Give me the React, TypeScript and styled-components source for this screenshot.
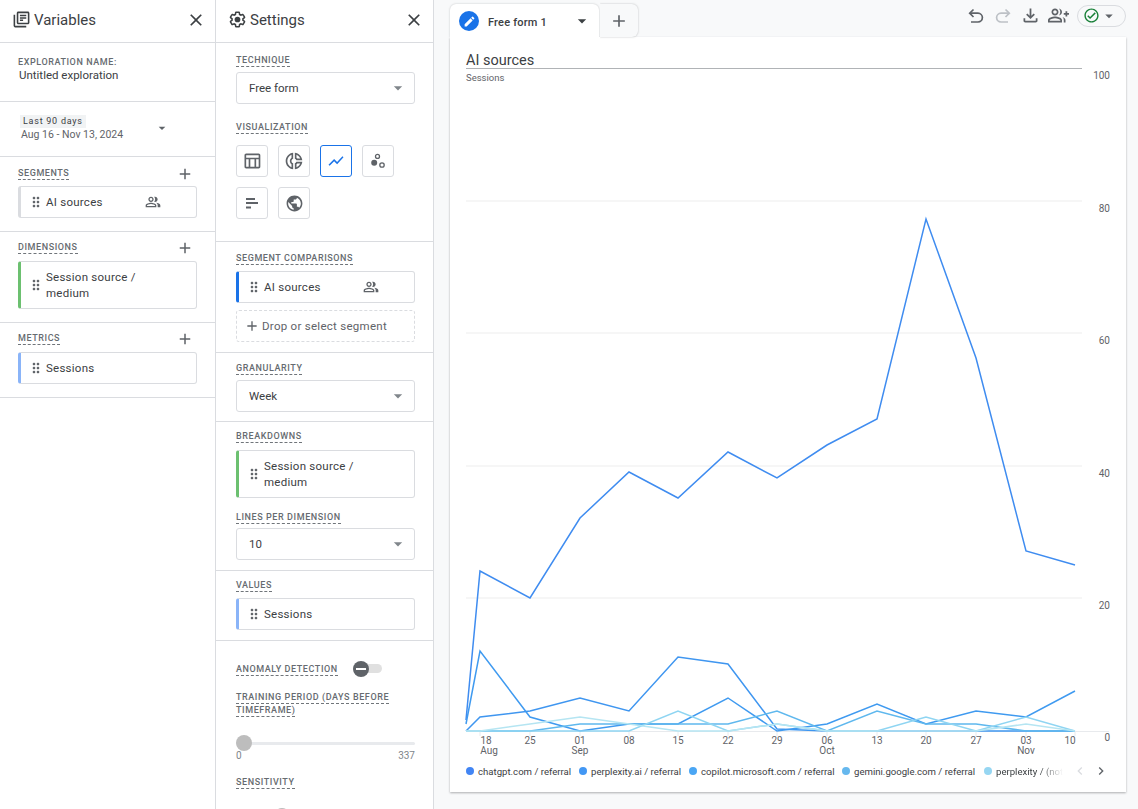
import React from "react";
import styled, { createGlobalStyle } from "styled-components";
import {
  MdAdd, MdArrowDropDown, MdChevronLeft, MdChevronRight, MdClose, MdDragIndicator, MdEdit,
  MdOutlineCheckCircle, MdOutlineDonutSmall, MdOutlineFileDownload, MdOutlineGroupAdd, MdOutlineLibraryBooks,
  MdOutlinePeopleAlt, MdOutlineTableChart, MdPublic, MdShowChart,
} from "react-icons/md";

const Global = createGlobalStyle`
  html, body { margin: 0; padding: 0; height: 100%; overflow: hidden; background: #f8f9fa; }
  body { font-family: Roboto, "Liberation Sans", sans-serif; color: #3c4043; }
  * { box-sizing: border-box; }
`;

const Page = styled.div`display: flex; width: 1138px; height: 809px; overflow: hidden;`;
const Column = styled.aside<{ $w: number }>`
  width: ${(p) => p.$w}px; flex: none; height: 809px; background: #fff; border-right: 1px solid #dadce0; overflow: hidden;
`;
const PanelHeader = styled.header`
  height: 43px; border-bottom: 1px solid #dadce0; display: flex; align-items: center; padding: 0 9px 3px 12px;
  font-size: 15px; color: #3c4043; gap: 3px;
  > svg:first-child { color: #3c4043; }
`;
const HeaderTitle = styled.span`flex: 1;`;
const Section = styled.section<{ $h: number; $pt: number; $px?: number }>`
  height: ${(p) => p.$h}px; padding: ${(p) => p.$pt}px ${(p) => p.$px ?? 18}px 0; border-bottom: 1px solid #dadce0;
`;
const OpenSection = styled.section`padding: 18px 18px 0 20px;`;
const Label = styled.div<{ $mb?: number; $mt?: number }>`
  display: block; width: fit-content; font-size: 9px; font-weight: 500; letter-spacing: .58px; line-height: 12px;
  color: #666b70; text-transform: uppercase; border-bottom: 1px dashed #70757a;
  margin-bottom: ${(p) => p.$mb ?? 5}px; margin-top: ${(p) => p.$mt ?? 0}px;
`;
const PlainLabel = styled.div`font-size: 9px; font-weight: 500; letter-spacing: .58px; color: #666b70; line-height: 12px;`;
const NameValue = styled.div`font-size: 11.5px; color: #3c4043; line-height: 14px; margin: 0 0 0 1px;`;
const DateRow = styled.div`display: flex; align-items: center; gap: 0; padding-left: 2px;`;
const DateText = styled.div`width: 134px;`;
const DateChip = styled.span`
  display: inline-block; background: #f1f3f4; font-size: 9px; font-weight: 400; letter-spacing: .75px; padding: 0 3px;
  line-height: 13px; color: #3c4043;
`;
const DateRange = styled.div`font-size: 10.5px; color: #5f6368; line-height: 13px; margin: 0 0 0 1px;`;
const DateCaret = styled.span`display: flex; margin-top: 5px; color: #5f6368;`;
const LabelRow = styled.div`display: flex; justify-content: space-between; align-items: flex-start; svg { color: #5f6368; margin: -2px 3px 0 0; }`;
const Chip = styled.div<{ $bar: string; $tall?: boolean }>`
  position: relative; display: flex; align-items: center; width: 179px; height: ${(p) => (p.$tall ? 48 : 32)}px;
  border: 1px solid #dadce0; border-left: 3px solid ${(p) => p.$bar}; border-radius: 3px; padding-left: 7px;
  font-size: 11.5px; color: #3c4043; line-height: 16px; letter-spacing: .25px;
  > svg:first-child { color: #5f6368; flex: none; margin-right: 2px; }
`;
const ChipText = styled.span`flex: 1;`;
const ChipPeople = styled.span`display: flex; color: #5f6368; margin-right: 35px;`;
const Select = styled.div`
  display: flex; align-items: center; justify-content: space-between; width: 179px; height: 32px;
  border: 1px solid #dadce0; border-radius: 3px; padding: 0 6px 0 12px; font-size: 11.5px; color: #3c4043;
  svg { color: #80868b; }
`;
const VizGrid = styled.div`display: flex; flex-wrap: wrap; gap: 10px; width: 179px;`;
const VizButton = styled.div<{ $active?: boolean }>`
  width: 32px; height: 32px; display: flex; align-items: center; justify-content: center; border-radius: 3px;
  border: 1px solid ${(p) => (p.$active ? "#1a73e8" : "#dadce0")}; color: ${(p) => (p.$active ? "#1a73e8" : "#5f6368")};
`;
const DropZone = styled.div`
  display: flex; align-items: center; gap: 2px; width: 179px; height: 32px; margin-top: 7px; padding-left: 7px;
  border: 1px dashed #dadce0; border-radius: 3px; font-size: 11.5px; color: #5f6368; letter-spacing: .28px;
`;
const ToggleRow = styled.div`display: flex; align-items: center; gap: 15px; margin-bottom: 12px; height: 20px;`;
const Toggle = styled.div`position: relative; width: 29px; height: 9px; border-radius: 5px; background: #e0e0e0; margin-top: -1px;`;
const Knob = styled.span`
  position: absolute; left: 0; top: -3.5px; width: 16px; height: 16px; border-radius: 50%; background: #5f6368;
  &::after { content: ""; position: absolute; left: 3px; right: 3px; top: 7px; height: 2px; background: #fff; }
`;
const SliderTrack = styled.div<{ $mt: number }>`
  position: relative; height: 3px; width: 179px; background: #e8eaed; border-radius: 2px; margin-top: ${(p) => p.$mt}px;
`;
const SliderThumb = styled.span<{ $l: number }>`
  position: absolute; left: ${(p) => p.$l}px; top: -7px; width: 16px; height: 16px; border-radius: 50%; background: #bdbdbd;
`;
const SliderEnds = styled.div`display: flex; justify-content: space-between; width: 179px; font-size: 10px; color: #80868b; margin-top: 5px; line-height: 12px;`;
const Main = styled.main`flex: 1; min-width: 0; padding: 4px 12px 0 16px; display: flex; flex-direction: column;`;
const TopBar = styled.div`display: flex; height: 33px; align-items: stretch;`;
const Tab = styled.div`
  width: 149px; background: #fff; border-radius: 6px 6px 0 0; display: flex; align-items: center; padding: 1px 7px 0 9px;
  box-shadow: 0 0 2px rgba(60, 64, 67, .3); font-size: 11px; font-weight: 500; color: #3c4043; letter-spacing: .2px;
  clip-path: inset(-3px -3px 0 -3px);
`;
const TabBadge = styled.span`
  width: 20px; height: 20px; border-radius: 50%; background: #1a73e8; color: #fff; display: flex; align-items: center;
  justify-content: center; margin-right: 9px; flex: none;
`;
const TabName = styled.span`flex: 1; padding-top: 2px;`;
const TabCaret = styled.span`display: flex; color: #3c4043; margin-top: -1px;`;
const AddTab = styled.div`
  width: 38px; margin-left: 1px; background: #f8f9fa; border-radius: 0 6px 6px 0; display: flex; align-items: center; justify-content: center;
  box-shadow: 0 0 2px rgba(60, 64, 67, .35); color: #5f6368; clip-path: inset(-3px -3px -3px 0);
`;
const Tools = styled.div`flex: 1; display: flex; justify-content: flex-end; align-items: center; margin-top: -10px; gap: 7px; color: #5f6368;`;
const ToolIcon = styled.span<{ $off?: boolean }>`display: flex; color: ${(p) => (p.$off ? "#bdc1c6" : "#5f6368")};`;
const StatusPill = styled.div`
  width: 49px; height: 22px; border: 1px solid #dadce0; border-radius: 11px; display: flex; align-items: center;
  padding-left: 5px; color: #5f6368; margin-left: 1px;
  > svg:first-child { color: #188038; }
`;
const Card = styled.article`
  width: 676px; height: 755px; background: #fff; box-shadow: 0 1px 2px rgba(60, 64, 67, .4); display: flex; flex-direction: column;
`;
const CardTitle = styled.h2`
  margin: 0 44px 0 16px; height: 32px; padding-top: 15px; font-size: 14.5px; font-weight: 400; line-height: 17px; color: #3c4043;
  border-bottom: 1px solid #b0b3b6;
`;
const ChartSvg = styled.svg`display: block; width: 676px; height: 691px; flex: none;`;
const AxisText = styled.text<{ $small?: boolean }>`
  font-family: Roboto, "Liberation Sans", sans-serif; font-size: ${(p) => (p.$small ? 9.5 : 10)}px; fill: #5f6368;
`;
const Legend = styled.div`display: flex; align-items: center; height: 32px; padding: 0 0 10px 16px; position: relative;`;
const LegendItem = styled.div<{ $w: number; $fade?: boolean }>`
  display: flex; align-items: center; gap: 4px; width: ${(p) => p.$w}px; flex: none; white-space: nowrap; overflow: hidden;
  font-size: 9.6px; color: #3c4043;
  ${(p) => (p.$fade ? "mask-image: linear-gradient(to right, #000 70%, transparent 100%);" : "")}
`;
const Dot = styled.span<{ $c: string }>`width: 8px; height: 8px; border-radius: 50%; flex: none; background: ${(p) => p.$c};`;
const Pager = styled.div`display: flex; align-items: center; gap: 5px; margin-left: 9px;`;
const PagerBtn = styled.span<{ $off?: boolean }>`display: flex; color: ${(p) => (p.$off ? "#dadce0" : "#5f6368")};`;

const X = [466, 480, 530, 580, 629, 678, 728, 777, 827, 877, 926, 976, 1026, 1075];
const series: { c: string; y: number[] }[] = [
  { c: "#3f96f0", y: [731, 717, 711, 698, 711, 657, 664, 729, 731, 731, 731, 731, 731, 731] },
  { c: "#3f8cf0", y: [720, 571, 598, 518, 472, 498, 452, 478, 445, 419, 219, 358, 551, 565] },
  { c: "#3f9af0", y: [724, 651, 717, 731, 724, 724, 698, 731, 724, 704, 724, 711, 717, 691] },
  { c: "#5fb8ee", y: [731, 731, 731, 724, 724, 724, 724, 711, 731, 711, 724, 724, 731, 731] },
  { c: "#8fd5f2", y: [731, 731, 731, 731, 731, 711, 731, 724, 731, 731, 717, 731, 717, 731] },
  { c: "#b5e5f2", y: [731, 731, 724, 717, 724, 731, 731, 724, 731, 731, 731, 731, 724, 731] },
];
const grid = [201, 333, 466, 598];
const ticks = [["18", "Aug"], ["25"], ["01", "Sep"], ["08"], ["15"], ["22"], ["29"], ["06", "Oct"], ["13"], ["20"], ["27"], ["03", "Nov"], ["10"]];
const tickShift = [6, 0, 0, 0, 0, 0, 0, 0, 0, 0, 0, 0, -5];
const yLabels: [string, number][] = [["100", 79], ["80", 212], ["60", 344], ["40", 477], ["20", 609], ["0", 741]];
const legend = [
  { t: "chatgpt.com / referral", c: "#4285f4", w: 113 },
  { t: "perplexity.ai / referral", c: "#4297f4", w: 110 },
  { t: "copilot.microsoft.com / referral", c: "#4aa6f4", w: 153 },
  { t: "gemini.google.com / referral", c: "#66b8ee", w: 142 },
  { t: "perplexity / (not set)", c: "#96d6f2", w: 79, fade: true },
];

const HBars = () => (
  <svg width="16" height="16" viewBox="0 0 16 16" fill="currentColor">
    <rect x="2" y="3" width="9" height="2" /><rect x="2" y="7" width="12" height="2" /><rect x="2" y="11.5" width="5" height="2" />
  </svg>
);
const Bubbles = () => (
  <svg width="16" height="16" viewBox="0 0 16 16">
    <circle cx="7.5" cy="3.4" r="2" fill="none" stroke="currentColor" strokeWidth="1.3" />
    <circle cx="4.2" cy="9.8" r="3" fill="currentColor" />
    <circle cx="12" cy="12" r="2.2" fill="none" stroke="currentColor" strokeWidth="1.3" />
  </svg>
);
const Gear = () => (
  <svg width="19" height="19" viewBox="0 0 24 24" fill="none" stroke="currentColor" strokeWidth="2.1">
    <path transform="translate(1 1) scale(.917)" d="M19.43 12.98c.04-.32.07-.64.07-.98s-.03-.66-.07-.98l2.11-1.65c.19-.15.24-.42.12-.64l-2-3.46c-.12-.22-.39-.3-.61-.22l-2.49 1c-.52-.4-1.08-.73-1.69-.98l-.38-2.65C14.46 2.18 14.25 2 14 2h-4c-.25 0-.46.18-.49.42l-.38 2.65c-.61.25-1.17.59-1.69.98l-2.49-1c-.23-.09-.49 0-.61.22l-2 3.46c-.13.22-.07.49.12.64l2.11 1.65c-.04.32-.07.65-.07.98s.03.66.07.98l-2.11 1.65c-.19.15-.24.42-.12.64l2 3.46c.12.22.39.3.61.22l2.49-1c.52.4 1.08.73 1.69.98l.38 2.65c.03.24.24.42.49.42h4c.25 0 .46-.18.49-.42l.38-2.65c.61-.25 1.17-.59 1.69-.98l2.49 1c.23.09.49 0 .61-.22l2-3.46c.12-.22.07-.49-.12-.64l-2.11-1.65z" />
    <circle cx="12" cy="12" r="3.6" fill="currentColor" stroke="none" />
  </svg>
);
const Undo = ({ flip }: { flip?: boolean }) => (
  <svg width="20" height="20" viewBox="0 0 20 20" fill="none" stroke="currentColor" strokeWidth="1.7" transform={flip ? "scale(-1 1)" : undefined}>
    <path d="M7.5 3.5L3.7 7.2l3.8 3.8" />
    <path d="M4 7.2h8a3.9 3.9 0 0 1 0 8.8H5" />
  </svg>
);

const Chart = () => (
  <ChartSvg viewBox="450 69 676 691">
    {grid.map((y) => <line key={y} x1="466" x2="1082" y1={y} y2={y} stroke="#ededed" />)}
    <line x1="466" x2="1109" y1="731.5" y2="731.5" stroke="#e8eaed" />
    {series.map((s, i) => (
      <polyline key={i} fill="none" stroke={s.c} strokeWidth="1.5"
        points={s.y.map((y, j) => `${X[j]},${y}`).join(" ")} />
    ))}
    {X.slice(1).map((x) => <line key={x} x1={x} x2={x} y1="732" y2="736" stroke="#e8eaed" />)}
    <AxisText $small x="466" y="81">Sessions</AxisText>
    {yLabels.map(([t, y]) => <AxisText key={t} x="1110" y={y} textAnchor="end">{t}</AxisText>)}
    {ticks.map((t, i) => (
      <g key={i}>
        <AxisText x={X[i + 1] + tickShift[i]} y="744" textAnchor="middle">{t[0]}</AxisText>
        {t[1] && <AxisText x={X[i + 1] + (i === 0 ? 9 : 0)} y="754" textAnchor="middle">{t[1]}</AxisText>}
      </g>
    ))}
  </ChartSvg>
);

const Close = () => <MdClose size={20} color="#3c4043" />;
const Grip = () => <MdDragIndicator size={16} />;

export default function App() {
  return (
    <Page>
      <Global />
      <Column $w={216}>
        <PanelHeader>
          <MdOutlineLibraryBooks size={19} />
          <HeaderTitle>Variables</HeaderTitle>
          <Close />
        </PanelHeader>
        <Section $h={59} $pt={13}>
          <PlainLabel>EXPLORATION NAME:</PlainLabel>
          <NameValue>Untitled exploration</NameValue>
        </Section>
        <Section $h={55} $pt={7}>
          <DateRow>
            <DateText>
              <DateChip>Last 90 days</DateChip>
              <DateRange>Aug 16 - Nov 13, 2024</DateRange>
            </DateText>
            <DateCaret><MdArrowDropDown size={16} /></DateCaret>
          </DateRow>
        </Section>
        <Section $h={75} $pt={10}>
          <LabelRow><Label $mb={6}>Segments</Label><MdAdd size={18} /></LabelRow>
          <Chip $bar="#dadce0"><Grip /><ChipText>AI sources</ChipText><ChipPeople><MdOutlinePeopleAlt size={16} /></ChipPeople></Chip>
        </Section>
        <Section $h={91} $pt={9}>
          <LabelRow><Label $mb={7}>Dimensions</Label><MdAdd size={18} /></LabelRow>
          <Chip $bar="#6cc070" $tall><Grip /><ChipText>Session source /<br />medium</ChipText></Chip>
        </Section>
        <Section $h={75} $pt={9}>
          <LabelRow><Label $mb={7}>Metrics</Label><MdAdd size={18} /></LabelRow>
          <Chip $bar="#8ab4f8"><Grip /><ChipText>Sessions</ChipText></Chip>
        </Section>
      </Column>
      <Column $w={218}>
        <PanelHeader>
          <Gear />
          <HeaderTitle>Settings</HeaderTitle>
          <Close />
        </PanelHeader>
        <Section $h={199} $pt={11} $px={20}>
          <Label>Technique</Label>
          <Select>Free form<MdArrowDropDown size={20} /></Select>
          <Label $mt={17} $mb={11}>Visualization</Label>
          <VizGrid>
            <VizButton><MdOutlineTableChart size={20} /></VizButton>
            <VizButton><MdOutlineDonutSmall size={20} /></VizButton>
            <VizButton $active><MdShowChart size={18} /></VizButton>
            <VizButton><Bubbles /></VizButton>
            <VizButton><HBars /></VizButton>
            <VizButton><MdPublic size={19} /></VizButton>
          </VizGrid>
        </Section>
        <Section $h={111} $pt={10} $px={20}>
          <Label $mb={6}>Segment comparisons</Label>
          <Chip $bar="#1a73e8"><Grip /><ChipText>AI sources</ChipText><ChipPeople><MdOutlinePeopleAlt size={16} /></ChipPeople></Chip>
          <DropZone><MdAdd size={16} />Drop or select segment</DropZone>
        </Section>
        <Section $h={69} $pt={9} $px={20}>
          <Label $mb={5}>Granularity</Label>
          <Select>Week<MdArrowDropDown size={20} /></Select>
        </Section>
        <Section $h={149} $pt={8} $px={20}>
          <Label $mb={7}>Breakdowns</Label>
          <Chip $bar="#6cc070" $tall><Grip /><ChipText>Session source /<br />medium</ChipText></Chip>
          <Label $mt={13} $mb={4}>Lines per dimension</Label>
          <Select>10<MdArrowDropDown size={20} /></Select>
        </Section>
        <Section $h={70} $pt={8} $px={20}>
          <Label $mb={6}>Values</Label>
          <Chip $bar="#8ab4f8"><Grip /><ChipText>Sessions</ChipText></Chip>
        </Section>
        <OpenSection>
          <ToggleRow><Label $mb={0}>Anomaly detection</Label><Toggle><Knob /></Toggle></ToggleRow>
          <Label $mb={0}>Training period (days before</Label>
          <Label>timeframe)</Label>
          <SliderTrack $mt={25}><SliderThumb $l={0} /></SliderTrack>
          <SliderEnds><span>0</span><span>337</span></SliderEnds>
          <Label $mt={14}>Sensitivity</Label>
          <SliderTrack $mt={26}><SliderThumb $l={38} /></SliderTrack>
        </OpenSection>
      </Column>
      <Main>
        <TopBar>
          <Tab>
            <TabBadge><MdEdit size={13} /></TabBadge>
            <TabName>Free form 1</TabName>
            <TabCaret><MdArrowDropDown size={20} /></TabCaret>
          </Tab>
          <AddTab><MdAdd size={20} /></AddTab>
          <Tools>
            <ToolIcon><Undo /></ToolIcon>
            <ToolIcon $off><Undo flip /></ToolIcon>
            <ToolIcon><MdOutlineFileDownload size={21} /></ToolIcon>
            <ToolIcon><MdOutlineGroupAdd size={21} /></ToolIcon>
            <StatusPill><MdOutlineCheckCircle size={17} /><MdArrowDropDown size={18} /></StatusPill>
          </Tools>
        </TopBar>
        <Card>
          <CardTitle>AI sources</CardTitle>
          <Chart />
          <Legend>
            {legend.map((l) => (
              <LegendItem key={l.t} $w={l.w} $fade={l.fade}><Dot $c={l.c} />{l.t}</LegendItem>
            ))}
            <Pager>
              <PagerBtn $off><MdChevronLeft size={16} /></PagerBtn>
              <PagerBtn><MdChevronRight size={16} /></PagerBtn>
            </Pager>
          </Legend>
        </Card>
      </Main>
    </Page>
  );
}
